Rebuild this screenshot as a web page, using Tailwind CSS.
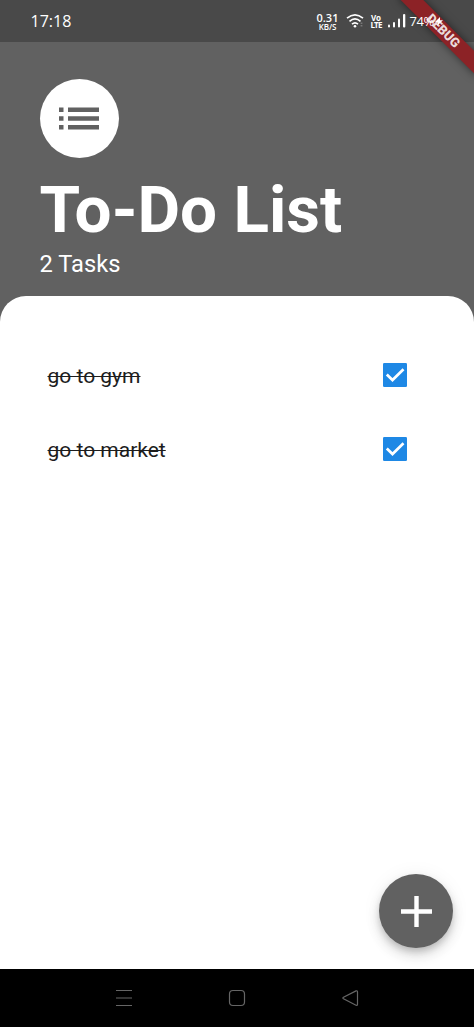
<!DOCTYPE html>
<html lang="en">
<head>
<meta charset="utf-8">
<title>To-Do List</title>
<script src="https://cdn.jsdelivr.net/npm/@tailwindcss/browser@4"></script>
</head>
<body class="font-['Roboto',sans-serif]">
<div class="relative flex h-[1027px] w-[474px] flex-col overflow-hidden bg-[#616161]">
  <div class="flex h-[42px] shrink-0 items-center bg-[#494949] pl-[30.500px] text-white">
    <span class="w-[286.500px] font-['Open_Sans',sans-serif] text-[16px] leading-[42px]">17:18</span>
    <div class="flex w-[21px] flex-col items-center whitespace-nowrap pt-[1px] font-['Open_Sans',sans-serif] font-semibold">
      <span class="text-[11px] leading-[10px]">0.31</span>
      <span class="text-[8px] leading-[8px] tracking-[-0.1px]">KB/S</span>
    </div>
    <svg class="ml-[8px] h-[16px] w-[18px]" viewBox="0 0 18 16" fill="none" stroke="#fff" stroke-width="1.6">
      <path d="M1 5.2Q9-1.6 17 5.2M3.5 8.3Q9 3.6 14.5 8.3M6 11.2Q9 8.600 12 11.2"/>
      <circle cx="9" cy="13.2" r="1.3" fill="#fff" stroke="none"/>
      <path d="M15.500 9.500v1.500M15.500 12v1.500" stroke="#777" stroke-width="1.800"/>
    </svg>
    <div class="ml-[6px] flex w-[12px] flex-col items-center pt-[1px] font-['Open_Sans',sans-serif] font-bold">
      <span class="text-[8px] leading-[7px]">Vo</span>
      <span class="text-[8px] leading-[8px] tracking-[-0.8px]">LTE</span>
    </div>
    <svg class="ml-[6px] h-[14px] w-[18px]" viewBox="0 0 18 14" fill="#fff">
      <rect x="0" y="10.500" width="2" height="3" rx="1"/><rect x="5" y="8" width="2" height="5.500" rx="1"/><rect x="10" y="4.500" width="2" height="9" rx="1"/><rect x="15" y="0" width="2.300" height="13.500" rx="1"/>
    </svg>
    <span class="relative z-10 ml-[3.500px] w-[25px] font-['Open_Sans',sans-serif] text-[13px] leading-[42px] tracking-[-0.4px]">74%</span>
    <svg class="relative z-10 h-[9px] w-[8px]" viewBox="0 0 8 9" fill="#fff"><path d="M5 0 0 5h3.200L2 9l6-5.700H5z"/></svg>
  </div>
  <div class="absolute left-[388px] top-[23px] h-[16px] w-[110px] rotate-45 bg-[#8c2226] text-center text-[13px] font-black leading-[16px] tracking-[-0.1px] text-[#eadada] shadow-[0_0_8px_rgba(0,0,0,0.5)]">DEBUG</div>
  <header class="flex h-[254px] shrink-0 flex-col items-start pl-[39.500px] pt-[37px] text-white">
    <div class="flex size-[79px] items-center justify-center rounded-full bg-white">
      <svg class="h-[23px] w-[40px]" viewBox="0 0 40 23" fill="#616161">
        <path d="M0 .5h4.500V5H0zM0 9.250h4.500v4.500H0zM0 18h4.500v4.500H0zM9 .5h31V5H9zM9 9.250h31v4.500H9zM9 18h31v4.500H9z"/>
      </svg>
    </div>
    <h1 class="mt-[13px] whitespace-nowrap text-[65.600px] font-bold leading-[77px]">To-Do List</h1>
    <p class="text-[23.700px] leading-[28px] mt-[2px]">2 Tasks</p>
  </header>
  <main class="relative h-[673px] shrink-0 rounded-t-[26px] bg-white pl-[47.500px] pr-[67px] pt-[42px] text-[21px] text-[#1d1d1d]">
    <div class="flex h-[74px] items-center justify-between">
      <span class="pt-[3px] line-through decoration-1">go to gym</span>
      <svg class="size-[24px]" viewBox="0 0 24 24"><rect width="24" height="24" rx="1.300" fill="#1e88e5"/><path d="M3.800 11.500 9.500 17 20.500 6.300" fill="none" stroke="#fff" stroke-width="2.700"/></svg>
    </div>
    <div class="flex h-[74px] items-center justify-between">
      <span class="pt-[3px] line-through decoration-1">go to market</span>
      <svg class="size-[24px]" viewBox="0 0 24 24"><rect width="24" height="24" rx="1.300" fill="#1e88e5"/><path d="M3.800 11.500 9.500 17 20.500 6.300" fill="none" stroke="#fff" stroke-width="2.700"/></svg>
    </div>
    <button class="absolute right-[21px] top-[578px] flex size-[74px] items-center justify-center rounded-full bg-[#616161] shadow-[0_4px_7px_-1px_rgba(0,0,0,0.18),0_8px_13px_rgba(0,0,0,0.12),0_1px_20px_rgba(0,0,0,0.06)]" aria-label="Add task">
      <svg class="size-[31px]" viewBox="0 0 31 31" fill="#fff"><path d="M13.300 0h4.400v13.300H31v4.400H17.700V31h-4.400V17.700H0v-4.400h13.300z"/></svg>
    </button>
  </main>
  <nav class="flex h-[58px] shrink-0 items-center justify-between bg-black px-[115px]">
    <svg class="size-[18px]" viewBox="0 0 18 18" stroke="#666" stroke-width="1.200"><path d="M1 1.500h16M1 9h16M1 16.500h16"/></svg>
    <svg class="size-[18px]" viewBox="0 0 18 18" fill="none" stroke="#666" stroke-width="1.200"><rect x="1.500" y="1.500" width="15" height="15" rx="3.500"/></svg>
    <svg class="size-[18px]" viewBox="0 0 18 18" fill="none" stroke="#666" stroke-width="1.200"><path d="M15 1.900 2.500 8.200q-1.200.8 0 1.600L15 16.200q1.500.5 1.500-1V3q0-1.600-1.500-1.100z"/></svg>
  </nav>
</div>
</body>
</html>
